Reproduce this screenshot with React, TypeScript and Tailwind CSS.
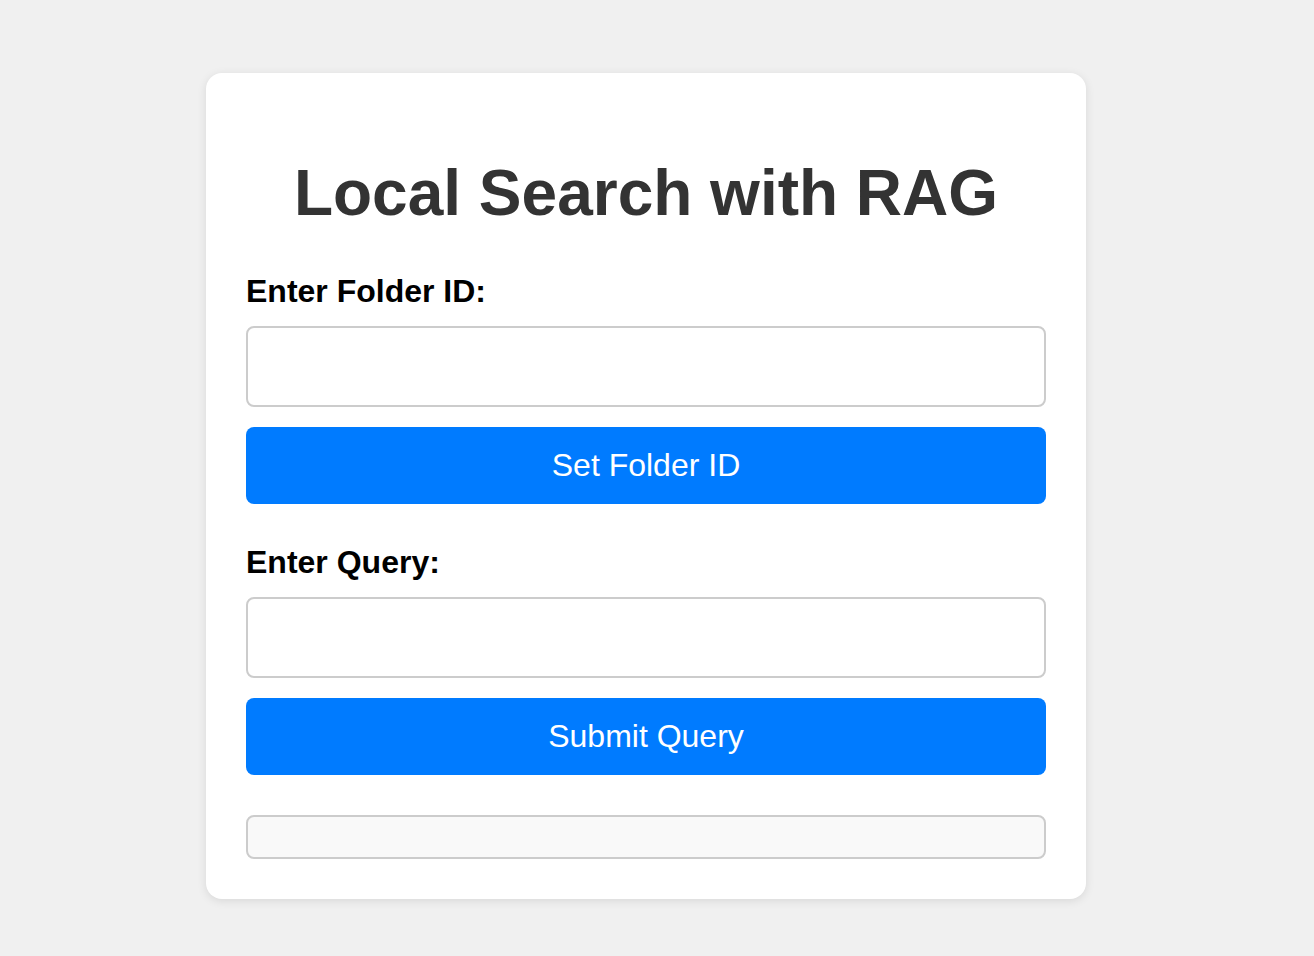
import React from "react";

export default function App() {
  return (
    <div className="min-h-screen bg-[#f0f0f0] pt-[73px] pb-[58px] pr-[22px] flex justify-center items-start font-['Liberation_Sans',Arial,sans-serif]">
      <div className="w-[880px] bg-white rounded-2xl p-10 shadow-[0_2px_10px_rgba(0,0,0,0.1)]">
        <h1 className="text-[64px] font-bold leading-[normal] text-[#333] text-center my-[43px]">
          Local Search with RAG
        </h1>
        <div className="flex flex-col">
          <label className="text-[32px] font-bold text-black leading-[normal] mb-4">Enter Folder ID:</label>
          <input
            type="text"
            className="w-full h-[81px] px-5 text-[32px] leading-[normal] border-2 border-[#ccc] rounded-lg bg-white outline-none"
          />
          <button className="mt-5 w-full h-[77px] bg-[#007bff] text-white text-[32px] leading-[normal] rounded-lg">
            Set Folder ID
          </button>
        </div>
        <div className="flex flex-col mt-10">
          <label className="text-[32px] font-bold text-black leading-[normal] mb-4">Enter Query:</label>
          <input
            type="text"
            className="w-full h-[81px] px-5 text-[32px] leading-[normal] border-2 border-[#ccc] rounded-lg bg-white outline-none"
          />
          <button className="mt-5 w-full h-[77px] bg-[#007bff] text-white text-[32px] leading-[normal] rounded-lg">
            Submit Query
          </button>
        </div>
        <div className="mt-10 h-[44px] bg-[#f9f9f9] border-2 border-[#ccc] rounded-lg" />
      </div>
    </div>
  );
}
